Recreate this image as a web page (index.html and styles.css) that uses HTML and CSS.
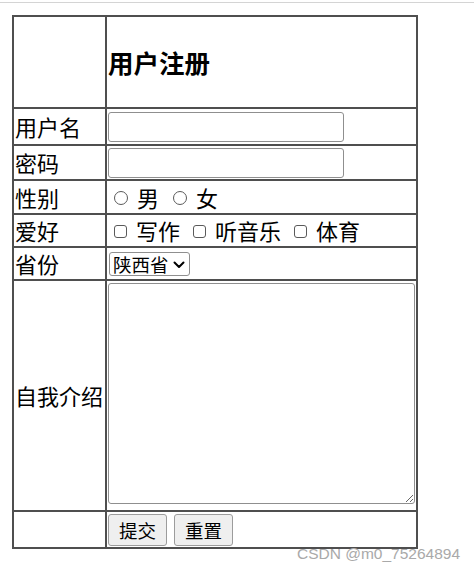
FILE: index.html
```html
<!DOCTYPE html>
<html lang="zh-CN">
<head>
<meta charset="utf-8">
<title>用户注册</title>
<link rel="stylesheet" href="styles.css">
</head>
<body>
<div class="topline"></div>
<form class="reg">
<table class="form-table">
  <colgroup><col class="c1"><col class="c2"></colgroup>
  <tr class="r-head"><td></td><td><span class="title">用户注册</span></td></tr>
  <tr class="r-user"><td>用户名</td><td><input class="txt" type="text"></td></tr>
  <tr class="r-pass"><td>密码</td><td><input class="txt" type="password"></td></tr>
  <tr class="r-sex"><td>性别</td><td>
    <div class="opts">
      <label class="opt"><input class="rad" type="radio" name="sex">男</label>
      <label class="opt"><input class="rad" type="radio" name="sex">女</label>
    </div>
  </td></tr>
  <tr class="r-hobby"><td>爱好</td><td>
    <div class="opts opts-chk">
      <label class="opt"><input class="chk" type="checkbox">写作</label>
      <label class="opt"><input class="chk" type="checkbox">听音乐</label>
      <label class="opt"><input class="chk" type="checkbox">体育</label>
    </div>
  </td></tr>
  <tr class="r-prov"><td>省份</td><td>
    <span class="selwrap">
      <select class="sel"><option>陕西省</option><option>北京市</option></select>
      <svg class="chev" width="12" height="8" viewBox="0 0 12 8" aria-hidden="true"><path d="M1.5 1.5 L6 6 L10.5 1.5" fill="none" stroke="#000" stroke-width="2" stroke-linecap="round" stroke-linejoin="round"/></svg>
    </span>
  </td></tr>
  <tr class="r-intro"><td>自我介绍</td><td><textarea class="area"></textarea></td></tr>
  <tr class="r-btn"><td></td><td>
    <div class="btns"><button class="btn" type="submit">提交</button><button class="btn" type="reset">重置</button></div>
  </td></tr>
</table>
</form>
<div class="watermark">CSDN @m0_75264894</div>
</body>
</html>
```

FILE: styles.css
```css
html, body {
  margin: 0;
  padding: 0;
  background: #fff;
}
body {
  font-family: "Noto Sans CJK SC", "Noto Sans", sans-serif;
  color: #000;
  position: relative;
  width: 474px;
  height: 571px;
  overflow: hidden;
}
.topline {
  margin-top: 2px;
  border-top: 1px solid #d4d4d4;
}
.reg {
  margin: 0;
}
.form-table {
  margin: 12px 0 0 12px;
  border-collapse: collapse;
  table-layout: fixed;
  width: 404px;
  font-size: 22px;
}
.c1 { width: 93px; }
.c2 { width: 311px; }
.form-table td {
  border: 2px solid #4f4f4f;
  padding: 0 0 0 1px;
  line-height: 1.1;
  vertical-align: middle;
  white-space: nowrap;
}
.r-head { height: 92px; }
.r-user { height: 37px; }
.r-pass { height: 35px; }
.r-sex { height: 34px; }
.r-hobby { height: 33px; }
.r-prov { height: 33px; }
.r-intro { height: 231px; }
.r-btn { height: 37px; }

.title {
  font-size: 25.5px;
  font-weight: bold;
}
.txt {
  display: block;
  box-sizing: border-box;
  width: 236px;
  height: 30px;
  margin: 0;
  padding: 0 4px;
  border: 1px solid #8f8f8f;
  border-radius: 3px;
  background: #fff;
}
.opts {
  display: flex;
  align-items: center;
  gap: 8px;
}
.opts-chk { gap: 7px; }
.opt {
  display: inline-flex;
  align-items: center;
  flex: none;
}
.rad, .chk {
  appearance: none;
  -webkit-appearance: none;
  flex: none;
  box-sizing: border-box;
  min-width: 13px;
  width: 13px;
  height: 13px;
  margin: 1px 9px 0 6px;
  padding: 0;
  border: 1px solid #5a5a5a;
  background: #fff;
}
.rad { border-radius: 50%; min-width: 14px; width: 14px; height: 14px; }
.chk { border-radius: 3px; }
.selwrap {
  position: relative;
  display: block;
  width: 81px;
  height: 24px;
  margin-left: 1px;
}
.sel {
  appearance: none;
  -webkit-appearance: none;
  display: block;
  box-sizing: border-box;
  width: 81px;
  height: 24px;
  margin: 0;
  padding: 0 0 0 3px;
  font-family: "Noto Sans CJK SC", sans-serif;
  font-size: 18.5px;
  line-height: 22px;
  color: #000;
  background: #fff;
  border: 1px solid #8f8f8f;
  border-radius: 3px;
}
.chev {
  position: absolute;
  right: 5px;
  top: 9px;
  pointer-events: none;
}
.area {
  display: block;
  box-sizing: border-box;
  width: 307px;
  height: 221px;
  margin: 1px 0 5px 0;
  border: 1px solid #8f8f8f;
  border-radius: 3px;
  background: #fff;
}
.btns {
  display: flex;
  gap: 7px;
}
.btn {
  box-sizing: border-box;
  width: 59px;
  height: 32px;
  padding: 0;
  font-family: "Noto Sans CJK SC", sans-serif;
  font-size: 18.5px;
  color: #000;
  background: #efefef;
  border: 1px solid #9c9c9c;
  border-radius: 3px;
}
.watermark {
  position: absolute;
  left: 297px;
  top: 545px;
  font-family: "Liberation Sans", Arial, sans-serif;
  font-size: 15.5px;
  color: #a9a9a9;
  white-space: nowrap;
}
```
